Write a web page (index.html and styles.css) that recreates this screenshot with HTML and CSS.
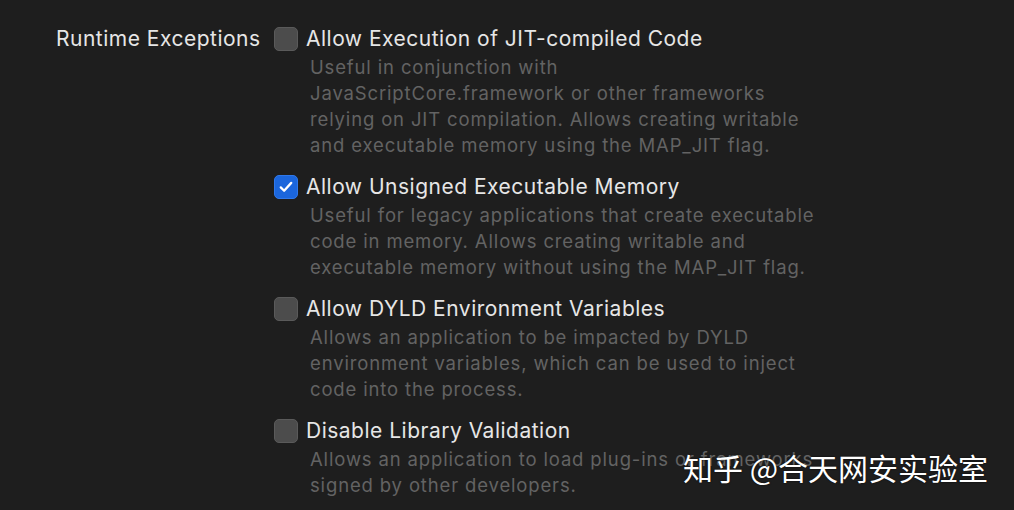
FILE: index.html
```html
<!DOCTYPE html>
<html lang="en">
<head>
  <meta charset="UTF-8">
  <link rel="stylesheet" href="styles.css">
  <title>Runtime Exceptions</title>
</head>
<body>

<div class="settings">
  <div class="group-label">Runtime Exceptions</div>
  <div class="options">

    <div class="option">
      <span class="box"></span>
      <div class="option-text">
        <div class="option-title">Allow Execution of JIT-compiled Code</div>
        <div class="option-desc">Useful in conjunction with<br>JavaScriptCore.framework or other frameworks<br>relying on JIT compilation. Allows creating writable<br>and executable memory using the MAP_JIT flag.</div>
      </div>
    </div>

    <div class="option">
      <span class="box checked">
        <svg viewBox="0 0 24 24" width="18" height="18"><path d="M5 12.5l4.5 4.5L19 6.5" fill="none" stroke="#fff" stroke-width="3" stroke-linecap="round" stroke-linejoin="round"/></svg>
      </span>
      <div class="option-text">
        <div class="option-title">Allow Unsigned Executable Memory</div>
        <div class="option-desc">Useful for legacy applications that create executable<br>code in memory. Allows creating writable and<br>executable memory without using the MAP_JIT flag.</div>
      </div>
    </div>

    <div class="option">
      <span class="box"></span>
      <div class="option-text">
        <div class="option-title">Allow DYLD Environment Variables</div>
        <div class="option-desc">Allows an application to be impacted by DYLD<br>environment variables, which can be used to inject<br>code into the process.</div>
      </div>
    </div>

    <div class="option">
      <span class="box"></span>
      <div class="option-text">
        <div class="option-title">Disable Library Validation</div>
        <div class="option-desc">Allows an application to load plug-ins or frameworks<br>signed by other developers.</div>
      </div>
    </div>

  </div>
</div>

<div class="watermark">知乎 @合天网安实验室</div>

</body>
</html>
```

FILE: styles.css
```css
body {
  margin: 0;
  background: #1e1e1e;
  font-family: Inter, "Noto Sans", sans-serif;
  height: 510px;
  overflow: hidden;
}

.settings {
  display: flex;
  padding: 24px 0 0 56px;
}

.group-label {
  width: 206px;
  margin-right: 12px;
  padding-top: 1px;
  font-size: 21px;
  letter-spacing: 0.5px;
  line-height: 28px;
  color: #e6e6e6;
}

.options {
  display: flex;
  flex-direction: column;
  gap: 14px;
}

.option {
  display: flex;
}

.box {
  width: 22px;
  height: 22px;
  margin: 3px 8px 0 0;
  border-radius: 5px;
  background: #4c4c4c;
  border: 1px solid #5a5a5a;
  flex-shrink: 0;
  display: flex;
  align-items: center;
  justify-content: center;
}

.box.checked {
  background: #1b66dc;
  border-color: #2f78ea;
}

.option-title {
  font-size: 21px;
  letter-spacing: 0.5px;
  line-height: 28px;
  padding-top: 1px;
  margin-bottom: 1px;
  color: #e6e6e6;
}

.option-desc {
  margin-left: 4px;
  font-size: 18.5px;
  letter-spacing: 0.85px;
  line-height: 26px;
  color: #636363;
}

.watermark {
  position: absolute;
  left: 683px;
  top: 447px;
  font-family: "Noto Sans CJK SC", sans-serif;
  font-size: 30px;
  line-height: 40px;
  color: #ffffff;
  text-shadow: 0 0 2px rgba(0, 0, 0, 0.8);
}
```
